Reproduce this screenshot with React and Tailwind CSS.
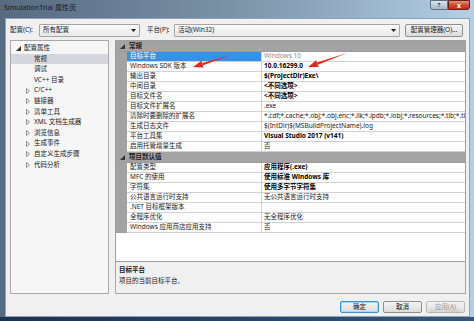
import React from 'react';

const FONT = "font-['Noto_Sans','Noto_Sans_CJK_SC',sans-serif]";

const treeItems = [
  { label: '配置属性', kind: 'root' },
  { label: '常规', kind: 'leaf', selected: true },
  { label: '调试', kind: 'leaf' },
  { label: 'VC++ 目录', kind: 'leaf' },
  { label: 'C/C++', kind: 'node' },
  { label: '链接器', kind: 'node' },
  { label: '清单工具', kind: 'node' },
  { label: 'XML 文档生成器', kind: 'node' },
  { label: '浏览信息', kind: 'node' },
  { label: '生成事件', kind: 'node' },
  { label: '自定义生成步骤', kind: 'node' },
  { label: '代码分析', kind: 'node' },
];

const generalRows = [
  { name: '目标平台', value: 'Windows 10', style: 'muted', selected: true },
  { name: 'Windows SDK 版本', value: '10.0.16299.0', style: 'bold' },
  { name: '输出目录', value: '$(ProjectDir)Exe\\', style: 'bold' },
  { name: '中间目录', value: '<不同选项>', style: 'bold' },
  { name: '目标文件名', value: '<不同选项>', style: 'bold' },
  { name: '目标文件扩展名', value: '.exe' },
  {
    name: '清除时要删除的扩展名',
    value: '*.cdf;*.cache;*.obj;*.obj.enc;*.ilk;*.ipdb;*.iobj;*.resources;*.tlb;*.tli;*.tlh;*.tmp;*.rsp',
  },
  { name: '生成日志文件', value: '$(IntDir)$(MSBuildProjectName).log' },
  { name: '平台工具集', value: 'Visual Studio 2017 (v141)', style: 'bold' },
  { name: '启用托管增量生成', value: '否' },
];

const defaultRows = [
  { name: '配置类型', value: '应用程序(.exe)', style: 'bold' },
  { name: 'MFC 的使用', value: '使用标准 Windows 库', style: 'bold' },
  { name: '字符集', value: '使用多字节字符集', style: 'bold' },
  { name: '公共语言运行时支持', value: '无公共语言运行时支持' },
  { name: '.NET 目标框架版本', value: '' },
  { name: '全程序优化', value: '无全程序优化' },
  { name: 'Windows 应用商店应用支持', value: '否' },
];

function Expanded() {
  return (
    <svg width="5" height="5" viewBox="0 0 5 5">
      <polygon points="5,0 5,5 0,5" fill="#333" />
    </svg>
  );
}

function Collapsed() {
  return (
    <svg width="4" height="6" viewBox="0 0 4 6">
      <polygon points="0.5,0.5 3.5,3 0.5,5.5" fill="none" stroke="#777" strokeWidth="0.8" />
    </svg>
  );
}

function Combo({ text, className }) {
  return (
    <div
      className={`shrink-0 h-[13px] flex items-center justify-between pl-[3px] pr-[3px] border border-[#a5a5a5] bg-gradient-to-b from-[#fbfbfb] to-[#e8e8e8] rounded-[1px] ${className}`}
    >
      <span>{text}</span>
      <svg width="5" height="3" viewBox="0 0 5 3">
        <polygon points="0,0 5,0 2.5,3" fill="#222" />
      </svg>
    </div>
  );
}

function GridHeader({ label }) {
  return (
    <div className="h-[11px] flex items-center bg-[#a3a3a3] border-b border-[#9a9a9a]">
      <span className="w-[13px] flex justify-center">
        <Expanded />
      </span>
      <span className="font-bold text-[#1c1c1c]">{label}</span>
    </div>
  );
}

function GridRow({ row }) {
  const valueClass =
    row.style === 'bold'
      ? 'font-bold text-black'
      : row.style === 'muted'
      ? 'text-[#8d8d8d]'
      : 'text-[#1a1a1a]';
  return (
    <div className="h-[10px] flex">
      <div className="shrink-0 w-[11px] bg-[#a3a3a3]" />
      <div
        className={`shrink-0 w-[135px] flex items-center pl-[3px] whitespace-nowrap overflow-hidden border-r border-b border-[#d3d3d3] ${
          row.selected ? 'bg-[#3592ea] text-white' : 'bg-white text-[#1a1a1a]'
        }`}
      >
        {row.name}
      </div>
      <div
        className={`flex-1 min-w-0 flex items-center pl-[2px] bg-white border-b border-[#d3d3d3] overflow-hidden whitespace-nowrap ${valueClass}`}
      >
        {row.value}
      </div>
    </div>
  );
}

function Button({ children, focused, disabled }) {
  return (
    <div
      className={`w-[39px] h-[12px] flex items-center justify-center rounded-[2px] border bg-gradient-to-b from-[#f4f4f4] to-[#dcdcdc] ${
        focused ? 'border-[#3c8fcf] shadow-[inset_0_0_0_1px_#a8d4f4]' : 'border-[#8e8e8e]'
      } ${disabled ? 'text-[#9c9c9c] border-[#b8b8b8]' : 'text-[#111]'}`}
    >
      {children}
    </div>
  );
}

export default function App() {
  return (
    <div
      className={`relative w-[474px] h-[321px] overflow-hidden flex flex-col bg-gradient-to-r from-[#566a80] via-[#7d93a8] to-[#b3d0e6] text-[6.5px] leading-none ${FONT}`}
    >
      {/* title bar */}
      <div className="h-[18px] flex items-start justify-between pl-[4px] pr-[4px]">
        <span className="mt-[4px] text-[7px] text-[#141a22]">SimulationTrial 属性页</span>
        <div className="flex">
          <div className="w-[18px] h-[10px] flex items-center justify-center border border-[#5d6f82] rounded-bl-[3px] bg-gradient-to-b from-[#dbe4ee] to-[#a9b8c8] text-[6px] font-bold text-[#2d3b4a]">
            ?
          </div>
          <div className="w-[22px] h-[10px] flex items-center justify-center border border-[#6b1d14] rounded-br-[3px] bg-gradient-to-b from-[#e9907d] via-[#cf4a33] to-[#c0301d] text-[7px] font-bold text-white">
            x
          </div>
        </div>
      </div>

      {/* client area */}
      <div className="flex-1 min-h-0 ml-[5px] mr-[4px] bg-[#f0f0f0] border border-[#8fa3b6] flex flex-col pl-[4px] pr-[3px] text-[#1a1a1a] whitespace-nowrap">
        <div className="mt-[4px] h-[14px] flex items-center">
          <span className="shrink-0 w-[29px]">配置(C):</span>
          <Combo text="所有配置" className="w-[101px]" />
          <span className="shrink-0 ml-[7px] w-[27px]">平台(P):</span>
          <Combo text="活动(Win32)" className="w-[226px]" />
          <div className="shrink-0 ml-[5px] w-[58px] h-[13px] flex items-center justify-center border border-[#8e8e8e] rounded-[2px] bg-gradient-to-b from-[#f4f4f4] to-[#dcdcdc]">
            配置管理器(O)...
          </div>
        </div>

        <div className="mt-[3px] h-[254px] flex gap-[6px]">
          {/* tree */}
          <div className="shrink-0 w-[99px] border border-[#a9a9a9] bg-[#f6f6f6] pt-[2px]">
            {treeItems.map((item) => (
              <div
                key={item.label}
                className={`h-[10.6px] flex items-center ${item.selected ? 'bg-[#d6d6de]' : ''}`}
              >
                {item.kind === 'root' && (
                  <>
                    <span className="w-[13px] flex justify-end pr-[3px]">
                      <Expanded />
                    </span>
                    <span>{item.label}</span>
                  </>
                )}
                {item.kind === 'leaf' && <span className="pl-[23px]">{item.label}</span>}
                {item.kind === 'node' && (
                  <>
                    <span className="w-[23px] flex justify-end pr-[4px]">
                      <Collapsed />
                    </span>
                    <span>{item.label}</span>
                  </>
                )}
              </div>
            ))}
          </div>

          {/* property grid + description */}
          <div className="flex-1 min-w-0 flex flex-col">
            <div className="h-[222px] border border-[#9f9f9f] bg-white overflow-hidden">
              <GridHeader label="常规" />
              {generalRows.map((r) => (
                <GridRow key={r.name} row={r} />
              ))}
              <GridHeader label="项目默认值" />
              {defaultRows.map((r) => (
                <GridRow key={r.name} row={r} />
              ))}
            </div>
            <div className="flex-1 border border-t-0 border-[#a9a9a9] bg-[#f0f0f0] pl-[3px] pt-[5px]">
              <div className="font-bold">目标平台</div>
              <div className="mt-[4px]">项目的当前目标平台。</div>
            </div>
          </div>
        </div>

        <div className="mt-[7px] flex justify-end gap-[4px] pr-[1px]">
          <Button focused>确定</Button>
          <Button>取消</Button>
          <Button disabled>应用(A)</Button>
        </div>
      </div>

      {/* bottom frame */}
      <div className="h-[4px] bg-gradient-to-r from-[#1d3150] to-[#35577a]" />

      {/* annotation arrows */}
      <svg className="absolute left-0 top-0 pointer-events-none" width="474" height="321">
        <polygon points="232,55 203,65.3 202.2,62.9" fill="#e3281f" />
        <polygon points="193,67 203.6,67.4 201.6,60.7" fill="#e3281f" />
        <polygon points="347,53 317.8,64.8 317,62.4" fill="#e3281f" />
        <polygon points="308,67 318.6,66.9 316.2,60.3" fill="#e3281f" />
      </svg>

      <span className="absolute left-[430px] top-[309px] text-[5px] text-[#9aa0a6] opacity-40">
        @51CTO博客
      </span>
    </div>
  );
}
